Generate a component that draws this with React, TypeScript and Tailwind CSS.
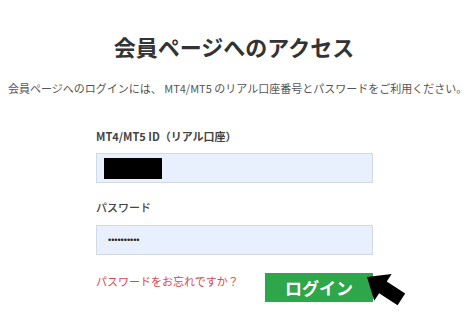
import React from "react";

export default function App() {
  return (
    <div
      className="relative w-[474px] h-[328px] overflow-hidden bg-white"
      style={{ fontFamily: '"Noto Sans CJK JP", "Noto Sans", sans-serif' }}
    >
      <div className="w-[468px] flex flex-col">
        <h1 className="mt-[30px] text-center text-[22px] leading-[32px] font-bold text-[#333333]">
          会員ページへのアクセス
        </h1>
        <p className="mt-[18px] pl-[8px] text-[11px] leading-[16px] text-[#555555] whitespace-nowrap">
          会員ページへのログインには、 MT4/MT5 のリアル口座番号とパスワードをご利用ください。
        </p>
        <div className="ml-[96px] w-[277px] flex flex-col">
          <label className="mt-[32px] text-[11px] leading-[16px] font-bold text-[#444444]">
            MT4/MT5 ID（リアル口座）
          </label>
          <div className="mt-[9px] h-[30px] bg-[#e8f0fe] border border-[#d3d9e2] flex items-center pl-[7px]">
            <div className="w-[58px] h-[21px] bg-black" />
          </div>
          <label className="mt-[16px] text-[11px] leading-[16px] font-medium text-[#444444]">
            パスワード
          </label>
          <div className="mt-[10px] h-[30px] bg-[#e8f0fe] border border-[#d3d9e2] flex items-center pl-[11px]">
            <span
              className="text-[9px] leading-[10px] text-[#222222]"
              style={{ fontFamily: '"Liberation Sans", sans-serif' }}
            >
              ••••••••••
            </span>
          </div>
          <div className="mt-[18px] flex items-start justify-between">
            <a className="text-[11px] leading-[16px] text-[#d8464f]">
              パスワードをお忘れですか？
            </a>
            <button className="w-[108px] h-[29px] bg-[#2ea64a] text-white text-[17px] font-bold flex items-center justify-center leading-none">
              ログイン
            </button>
          </div>
        </div>
      </div>
      <svg
        className="absolute left-[362px] top-[266px]"
        width="48"
        height="42"
        viewBox="0 0 48 42"
      >
        <g transform="translate(5 11) rotate(33)">
          <polygon points="0,0 19,-16 19,-7 41,-7 41,7 19,7 19,16" fill="#000" />
        </g>
      </svg>
    </div>
  );
}
